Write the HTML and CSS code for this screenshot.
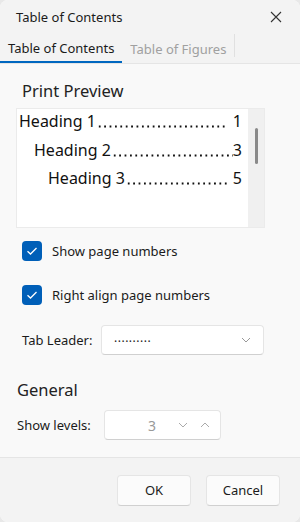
FILE: index.html
```html
<!DOCTYPE html>
<html lang="en">
<head>
    <meta charset="UTF-8">
    <title>Table of Contents</title>
    <link rel="stylesheet" href="styles.css">
</head>
<body>
    <div class="dialog">
        <div class="titlebar">
            <span class="title">Table of Contents</span>
            <button class="close" aria-label="Close">
                <svg width="12" height="12" viewBox="0 0 12 12"><path d="M1 1L11 11M11 1L1 11" stroke="#333" stroke-width="1.1" fill="none"/></svg>
            </button>
        </div>

        <div class="tabs">
            <div class="tab active">Table of Contents</div>
            <div class="tab">Table of Figures</div>
        </div>

        <div class="content">
            <h2 class="section-title preview-title">Print Preview</h2>
            <div class="preview">
                <div class="preview-list">
                    <div class="toc-row lvl1"><span>Heading 1</span><span class="leader"></span><span class="num gap">1</span></div>
                    <div class="toc-row lvl2"><span>Heading 2</span><span class="leader"></span><span class="num">3</span></div>
                    <div class="toc-row lvl3"><span>Heading 3</span><span class="leader"></span><span class="num gap">5</span></div>
                </div>
                <div class="scrollbar"><div class="thumb"></div></div>
            </div>

            <label class="check-row">
                <span class="checkbox"><svg width="12" height="10" viewBox="0 0 12 10"><path d="M1.5 5.2L4.5 8L10.5 2" stroke="#fff" stroke-width="1.3" fill="none"/></svg></span>
                Show page numbers
            </label>
            <label class="check-row">
                <span class="checkbox"><svg width="12" height="10" viewBox="0 0 12 10"><path d="M1.5 5.2L4.5 8L10.5 2" stroke="#fff" stroke-width="1.3" fill="none"/></svg></span>
                Right align page numbers
            </label>

            <div class="field-row leader-row">
                <span class="field-label">Tab Leader:</span>
                <div class="select">
                    <span class="select-value">..........</span>
                    <svg width="10" height="6" viewBox="0 0 10 6"><path d="M1 1L5 5L9 1" stroke="#999" stroke-width="1" fill="none"/></svg>
                </div>
            </div>

            <h2 class="section-title general-title">General</h2>
            <div class="field-row levels-row">
                <span class="field-label">Show levels:</span>
                <div class="spinner">
                    <span class="spin-value">3</span>
                    <svg width="10" height="6" viewBox="0 0 10 6"><path d="M1 1L5 5L9 1" stroke="#aaa" stroke-width="1" fill="none"/></svg>
                    <svg width="10" height="6" viewBox="0 0 10 6"><path d="M1 5L5 1L9 5" stroke="#aaa" stroke-width="1" fill="none"/></svg>
                </div>
            </div>
        </div>

        <div class="footer">
            <button class="btn">OK</button>
            <button class="btn">Cancel</button>
        </div>
    </div>
</body>
</html>
```

FILE: styles.css
```css
* {
    box-sizing: border-box;
}

body {
    margin: 0;
    background: #e8e8e8;
    font-family: 'Noto Sans', 'Open Sans', sans-serif;
    color: #1b1b1b;
}

.dialog {
    width: 300px;
    height: 522px;
    background: #f9f9f9;
    border-radius: 8px;
    overflow: hidden;
    display: flex;
    flex-direction: column;
}

.titlebar {
    height: 34px;
    background: #f3f3f3;
    display: flex;
    align-items: center;
    justify-content: space-between;
    padding: 0 10px 0 16px;
}

.title {
    font-size: 13px;
}

.close {
    border: none;
    background: none;
    width: 28px;
    height: 28px;
    display: flex;
    align-items: center;
    justify-content: center;
    padding: 0;
}

.tabs {
    height: 30px;
    display: flex;
    background: #f3f3f3;
    border-bottom: 1px solid #e5e5e5;
}

.tab {
    padding: 0 8px;
    font-size: 13px;
    color: #a0a0a0;
    display: flex;
    align-items: center;
    border-bottom: 2px solid transparent;
}

.tab + .tab {
    border-right: 1px solid #e0e0e0;
    margin: 0 0 6px;
    padding-top: 6px;
    border-bottom: none;
}

.tab.active {
    color: #1b1b1b;
    border-bottom-color: #0067c0;
}

.content {
    flex: 1;
    padding: 15px 16px 0 17px;
    display: flex;
    flex-direction: column;
}

.section-title {
    font-size: 16.5px;
    font-weight: normal;
    margin: 0;
    color: #222;
}

.preview-title {
    margin-left: 5px;
    margin-bottom: 6px;
}

.preview {
    width: 249px;
    height: 120px;
    margin-left: -1px;
    background: #fff;
    border: 1px solid #ebebeb;
    display: flex;
}

.preview-list {
    flex: 1;
    min-width: 0;
    padding: 0 6px 0 2px;
    font-size: 16px;
    color: #111;
}

.toc-row {
    display: flex;
    white-space: nowrap;
    height: 28.5px;
    line-height: 24px;
}

.lvl2 {
    padding-left: 15px;
}

.lvl3 {
    padding-left: 29px;
}

/* dotted tab leader drawn as a repeating dot */
.leader {
    flex: 1;
    min-width: 0;
    background-image: radial-gradient(circle, #111 0.9px, transparent 1.3px);
    background-size: 5.4px 3px;
    background-repeat: repeat-x;
    background-position: 1px 16px;
}

.num.gap {
    margin-left: 5px;
}

.scrollbar {
    width: 16px;
    flex-shrink: 0;
    background: #f0f0f0;
    padding-top: 19px;
    display: flex;
    justify-content: center;
}

.thumb {
    width: 3px;
    height: 36px;
    border-radius: 2px;
    background: #8a8a8a;
}

.check-row {
    display: flex;
    align-items: center;
    gap: 10px;
    font-size: 13px;
    margin-left: 5px;
    height: 20px;
    margin-top: 13px;
}

.check-row + .check-row {
    margin-top: 24px;
}

.checkbox {
    width: 20px;
    height: 20px;
    border-radius: 4px;
    background: #005fb8;
    display: flex;
    align-items: center;
    justify-content: center;
}

.field-row {
    display: flex;
    align-items: center;
    font-size: 13px;
}

.leader-row {
    margin-top: 20px;
    margin-left: 5px;
}

.leader-row .field-label {
    width: 79px;
}

.select {
    width: 163px;
    height: 30px;
    background: #fff;
    border: 1px solid #e5e5e5;
    border-bottom-color: #d0d0d0;
    border-radius: 4px;
    display: flex;
    align-items: center;
    justify-content: space-between;
    padding: 0 12px 0 12px;
}

.select-value {
    font-size: 12px;
    letter-spacing: 0.5px;
    position: relative;
    top: -3px;
}

.general-title {
    margin-top: 23px;
}

.levels-row {
    margin-top: 9px;
}

.levels-row .field-label {
    width: 87px;
}

.spinner {
    width: 117px;
    height: 30px;
    background: #fff;
    border: 1px solid #e5e5e5;
    border-bottom-color: #d0d0d0;
    border-radius: 4px;
    display: flex;
    align-items: center;
    justify-content: flex-end;
    gap: 12px;
    padding-right: 10px;
}

.spin-value {
    color: #999;
    font-size: 14px;
    margin-right: 10px;
}

.footer {
    height: 65px;
    background: #f3f3f3;
    border-top: 1px solid #e5e5e5;
    display: flex;
    justify-content: flex-end;
    align-items: center;
    gap: 15px;
    padding: 0 20px 0 0;
}

.btn {
    width: 74px;
    height: 31px;
    background: #fbfbfb;
    border: 1px solid #e5e5e5;
    border-bottom-color: #d0d0d0;
    border-radius: 4px;
    font-family: inherit;
    font-size: 13px;
    color: #1b1b1b;
}
```
